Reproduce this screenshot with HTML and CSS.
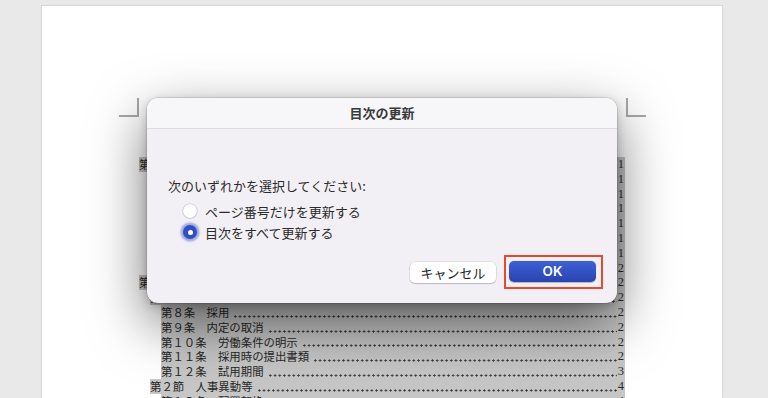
FILE: index.html
```html
<!DOCTYPE html>
<html lang="ja">
<head>
<meta charset="utf-8">
<title>目次の更新</title>
<link rel="stylesheet" href="styles.css">
</head>
<body>
<div class="page">
  <div class="marks">
    <span class="mark mark-left"></span>
    <span class="mark mark-right"></span>
  </div>
  <div class="toc">
    <div class="toc-line l1"><span class="t">第１章　総則</span><span class="leader"></span><span class="n">1</span></div>
    <div class="toc-line l3"><span class="t">第１条　目的</span><span class="leader"></span><span class="n">1</span></div>
    <div class="toc-line l3"><span class="t">第２条　適用範囲</span><span class="leader"></span><span class="n">1</span></div>
    <div class="toc-line l3"><span class="t">第３条　規則の遵守</span><span class="leader"></span><span class="n">1</span></div>
    <div class="toc-line l3"><span class="t">第４条　労働条件の変更</span><span class="leader"></span><span class="n">1</span></div>
    <div class="toc-line l3"><span class="t">第５条　用語の定義</span><span class="leader"></span><span class="n">1</span></div>
    <div class="toc-line l3"><span class="t">第６条　従業員の区分</span><span class="leader"></span><span class="n">1</span></div>
    <div class="toc-line l3"><span class="t">第７条　規則の周知</span><span class="leader"></span><span class="n">2</span></div>
    <div class="toc-line l1"><span class="t">第２章　人事</span><span class="leader"></span><span class="n">2</span></div>
    <div class="toc-line l2"><span class="t">第１節　採用</span><span class="leader"></span><span class="n">2</span></div>
    <div class="toc-line l3"><span class="t">第８条　採用</span><span class="leader"></span><span class="n">2</span></div>
    <div class="toc-line l3"><span class="t">第９条　内定の取消</span><span class="leader"></span><span class="n">2</span></div>
    <div class="toc-line l3"><span class="t">第１０条　労働条件の明示</span><span class="leader"></span><span class="n">2</span></div>
    <div class="toc-line l3"><span class="t">第１１条　採用時の提出書類</span><span class="leader"></span><span class="n">2</span></div>
    <div class="toc-line l3"><span class="t">第１２条　試用期間</span><span class="leader"></span><span class="n">3</span></div>
    <div class="toc-line l2"><span class="t">第２節　人事異動等</span><span class="leader"></span><span class="n">4</span></div>
    <div class="toc-line l3"><span class="t">第１３条　配置転換</span><span class="leader"></span><span class="n">4</span></div>
  </div>
</div>

<div class="dialog">
  <div class="dialog-title">目次の更新</div>
  <div class="dialog-body">
    <div class="prompt">次のいずれかを選択してください:</div>
    <div class="options">
      <div class="option"><span class="radio"></span><span class="label">ページ番号だけを更新する</span></div>
      <div class="option"><span class="radio checked"></span><span class="label">目次をすべて更新する</span></div>
    </div>
    <div class="buttons">
      <div class="btn btn-cancel">キャンセル</div>
      <div class="highlight"><div class="btn btn-ok">OK</div></div>
    </div>
  </div>
</div>
</body>
</html>
```

FILE: styles.css
```css
html, body {
  margin: 0;
  padding: 0;
}

body {
  width: 768px;
  height: 398px;
  overflow: hidden;
  background: #e9e9e9;
  padding-top: 6px;
  box-sizing: border-box;
  font-family: "Noto Sans CJK JP", "Noto Sans", sans-serif;
}

.page {
  margin-left: 42px;
  width: 680px;
  height: 392px;
  overflow: hidden;
  background: #ffffff;
  box-shadow: 0 0 0 1px #d9d9d9, 0 0 3px rgba(0, 0, 0, 0.08);
  padding-top: 92px;
  box-sizing: border-box;
}

.marks {
  margin-left: 77px;
  width: 527px;
  display: flex;
  justify-content: space-between;
}

.mark {
  display: block;
  width: 18px;
  height: 17px;
  border-bottom: 2px solid #a8a8a8;
}

.mark-left {
  border-right: 2px solid #a8a8a8;
}

.mark-right {
  border-left: 2px solid #a8a8a8;
}

.toc {
  margin-top: 40px;
  margin-left: 97px;
  width: 486px;
  display: flex;
  flex-direction: column;
}

.toc-line {
  height: 14.8px;
  display: flex;
  align-items: center;
  background: #c6c6c6;
  font-size: 11.4px;
  color: #262626;
  line-height: 14.8px;
}

.toc-line.l2 { margin-left: 11px; }
.toc-line.l3 { margin-left: 22px; }

.toc-line .t {
  white-space: nowrap;
  font-weight: 400;
}

.toc-line .leader {
  flex: 1;
  align-self: stretch;
  margin: 0 1px 0 4px;
  background-image: radial-gradient(circle, #3c3c3c 0.9px, rgba(0, 0, 0, 0) 1.3px);
  background-size: 4.7px 3px;
  background-repeat: repeat-x;
  background-position: 0 calc(100% - 2px);
}

.toc-line .n {
  font-family: "Liberation Serif", serif;
  font-size: 12.5px;
  color: #2a2a2a;
  padding-right: 1px;
}

.dialog {
  position: absolute;
  left: 147px;
  top: 98px;
  width: 470px;
  height: 205px;
  border-radius: 11px;
  overflow: hidden;
  background: #f2f0f4;
  box-shadow: 0 0 0 0.5px rgba(0, 0, 0, 0.2), 0 20px 55px rgba(0, 0, 0, 0.55), 0 3px 10px rgba(0, 0, 0, 0.2);
  display: flex;
  flex-direction: column;
}

.dialog-title {
  height: 30px;
  line-height: 30px;
  background: #f7f6f8;
  border-bottom: 1px solid #dddbe0;
  text-align: center;
  font-size: 13px;
  font-weight: 700;
  color: #3a3a3a;
}

.dialog-body {
  flex: 1;
  display: flex;
  flex-direction: column;
  padding: 48px 14px 14px 21px;
}

.prompt {
  font-size: 13px;
  line-height: 18px;
  height: 18px;
  color: #2b2b2b;
}

.options {
  margin-top: 5.5px;
  display: flex;
  flex-direction: column;
}

.option {
  height: 21px;
  display: flex;
  align-items: center;
  padding-left: 15px;
  gap: 8px;
}

.option .label {
  font-size: 13px;
  line-height: 17px;
  color: #2b2b2b;
}

.radio {
  width: 14px;
  height: 14px;
  flex: none;
  border-radius: 50%;
  background: #ffffff;
  box-sizing: border-box;
  box-shadow: 0 0 0 0.6px rgba(0, 0, 0, 0.18), 0 0.5px 1.5px rgba(0, 0, 0, 0.15);
  position: relative;
}

.radio.checked {
  background: #2f4fc2;
  box-shadow: 0 0 2px 2.5px rgba(50, 80, 200, 0.45);
}

.radio.checked::after {
  content: "";
  position: absolute;
  left: 4.5px;
  top: 4.5px;
  width: 5px;
  height: 5px;
  border-radius: 50%;
  background: #ffffff;
}

.buttons {
  margin-top: auto;
  display: flex;
  justify-content: flex-end;
  align-items: center;
  gap: 8px;
}

.btn {
  height: 21px;
  line-height: 21px;
  border-radius: 5px;
  text-align: center;
  box-sizing: border-box;
}

.btn-cancel {
  width: 86px;
  background: #ffffff;
  font-size: 13px;
  color: #262626;
  box-shadow: 0 0 0 0.5px rgba(0, 0, 0, 0.12), 0 1px 1.5px rgba(0, 0, 0, 0.18);
}

.highlight {
  border: 2px solid #e8492d;
  padding: 4px 5px 5px 3px;
}

.btn-ok {
  width: 87px;
  background: linear-gradient(#3e5fd5, #2a44b0);
  color: #ffffff;
  font-family: "Inter", "Liberation Sans", sans-serif;
  font-size: 13.5px;
  font-weight: 600;
  box-shadow: 0 0.5px 1px rgba(0, 0, 0, 0.25);
}
```
